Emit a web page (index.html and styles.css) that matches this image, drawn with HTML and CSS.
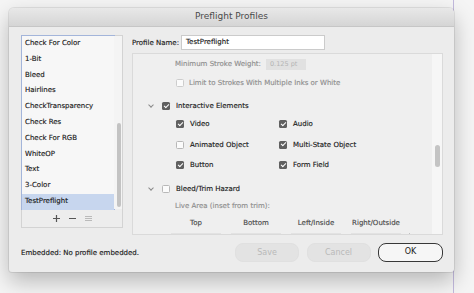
FILE: index.html
```html
<!DOCTYPE html>
<html lang="en">
<head>
  <meta charset="utf-8">
  <title>Preflight Profiles</title>
  <link rel="stylesheet" href="styles.css">
</head>
<body>
  <div class="window">
    <div class="titlebar">Preflight Profiles</div>
    <div class="content">
      <div class="main">
        <div class="profiles">
          <div class="listwrap">
            <ul class="rows">
              <li>Check For Color</li>
              <li>1-Bit</li>
              <li>Bleed</li>
              <li>Hairlines</li>
              <li>CheckTransparency</li>
              <li>Check Res</li>
              <li>Check For RGB</li>
              <li>WhiteOP</li>
              <li>Text</li>
              <li>3-Color</li>
              <li class="selected">TestPreflight</li>
            </ul>
            <div class="vscroll"><div class="thumb"></div></div>
          </div>
          <div class="listbar">
            <svg width="7" height="7" viewBox="0 0 7 7"><path d="M3.5 0v7M0 3.5h7" stroke="#555" stroke-width="1.2"/></svg>
            <svg width="7" height="7" viewBox="0 0 7 7"><path d="M0 3.5h7" stroke="#555" stroke-width="1.2"/></svg>
            <svg width="7" height="7" viewBox="0 0 7 7"><path d="M0 1.5h7M0 3.5h7M0 5.5h7" stroke="#b4b4b4" stroke-width="0.9"/></svg>
          </div>
        </div>

        <div class="editor">
          <div class="name-row">
            <span class="label">Profile Name:</span>
            <div class="field">TestPreflight</div>
          </div>
          <div class="panel">
            <div class="panel-body">
              <div class="prop-row stroke">
                <span class="dim">Minimum Stroke Weight:</span>
                <div class="field small">0.125 pt</div>
              </div>
              <div class="prop-row limit">
                <span class="cb off"></span>
                <span class="dim">Limit to Strokes With Multiple Inks or White</span>
              </div>
              <div class="prop-row section first">
                <span class="chevron"></span>
                <span class="cb on"></span>
                <span>Interactive Elements</span>
              </div>
              <div class="options">
                <div class="prop-row"><span class="cb on"></span><span>Video</span></div>
                <div class="prop-row"><span class="cb on"></span><span>Audio</span></div>
                <div class="prop-row"><span class="cb off"></span><span>Animated Object</span></div>
                <div class="prop-row"><span class="cb on"></span><span>Multi-State Object</span></div>
                <div class="prop-row"><span class="cb on"></span><span>Button</span></div>
                <div class="prop-row"><span class="cb on"></span><span>Form Field</span></div>
              </div>
              <div class="prop-row section">
                <span class="chevron"></span>
                <span class="cb off"></span>
                <span>Bleed/Trim Hazard</span>
              </div>
              <div class="prop-row live">
                <span class="dim">Live Area (inset from trim):</span>
              </div>
              <div class="insets">
                <span>Top</span>
                <span>Bottom</span>
                <span>Left/Inside</span>
                <span>Right/Outside</span>
              </div>
              <div class="inset-fields">
                <div></div><div></div><div></div><div></div>
                <span class="spin"></span>
              </div>
            </div>
            <div class="pscroll"><div class="thumb"></div></div>
          </div>
        </div>
      </div>

      <div class="footer">
        <div class="embedded">Embedded: No profile embedded.</div>
        <div class="buttons">
          <div class="btn disabled">Save</div>
          <div class="btn disabled">Cancel</div>
          <div class="btn default">OK</div>
        </div>
      </div>
    </div>
  </div>
</body>
</html>
```

FILE: styles.css
```css
html, body {
  margin: 0;
  height: 100%;
}

body {
  background:
    linear-gradient(to right, transparent 453px, #c2b9dd 453px, #c2b9dd 454px, transparent 454px),
    #f5f5f5;
  font-family: "DejaVu Sans", Verdana, sans-serif;
  font-size: 7px;
  color: #1a1a1a;
  overflow: hidden;
}

.window {
  margin: 8px 0 0 9px;
  width: 445px;
  height: 264px;
  background: #ececec;
  border-radius: 5px 5px 3px 3px;
  box-shadow: 0 0 0 1px rgba(0, 0, 0, 0.08), 0 9px 22px rgba(0, 0, 0, 0.26);
  overflow: hidden;
  -webkit-text-stroke: 0.15px currentColor;
}

.titlebar {
  box-sizing: border-box;
  height: 19px;
  line-height: 17px;
  text-align: center;
  font-size: 9px;
  color: #4a4a4a;
  background: linear-gradient(#e8e8e8, #d5d5d5);
  border-bottom: 1px solid #c6c6c6;
  -webkit-text-stroke: 0;
}

.content {
  padding: 8px 11px 0 12px;
}

.main {
  display: flex;
  gap: 9px;
}

/* profile list */

.profiles {
  box-sizing: border-box;
  width: 102px;
  height: 193px;
  border: 1px solid #d3d3d3;
  background: #ededed;
}

.listwrap {
  display: flex;
  height: 173px;
}

.rows {
  list-style: none;
  margin: 0;
  padding: 0;
  width: 92px;
  background: #f7f7f7;
  box-shadow: 0 0 0 1px #a3b5da;
}

.rows li {
  height: 15.8px;
  line-height: 15.8px;
  padding-left: 3px;
  white-space: nowrap;
}

.rows li.selected {
  background: #c7d6ee;
}

.vscroll {
  width: 8px;
  background: #f4f4f4;
}

.vscroll .thumb {
  margin: 87px 0 0 3px;
  width: 4px;
  height: 84px;
  border-radius: 2px;
  background: #c3c3c3;
}

.listbar {
  height: 18px;
  display: flex;
  align-items: center;
  justify-content: center;
  gap: 9px;
}

/* editor */

.editor {
  width: 311px;
  display: flex;
  flex-direction: column;
}

.name-row {
  display: flex;
  align-items: center;
  height: 15px;
}

.name-row .label {
  width: 49px;
}

.field {
  box-sizing: border-box;
  width: 144px;
  height: 15px;
  line-height: 13px;
  padding-left: 4px;
  background: #fff;
  border: 1px solid #cbcbcb;
}

.panel {
  box-sizing: border-box;
  margin-top: 3px;
  height: 182px;
  display: flex;
  border: 1px solid #dadada;
  background: #efefef;
}

.panel-body {
  flex: 1;
  overflow: hidden;
  padding-top: 4px;
}

.pscroll {
  width: 10px;
  background: #f6f6f6;
}

.pscroll .thumb {
  margin: 91px 0 0 3px;
  width: 5px;
  height: 22px;
  border-radius: 3px;
  background: #c4c4c4;
}

.prop-row {
  display: flex;
  align-items: center;
  height: 12px;
  white-space: nowrap;
}

.dim {
  color: #8e8e8e;
}

.stroke {
  padding-left: 42px;
  gap: 5px;
}

.field.small {
  width: 40px;
  height: 11px;
  line-height: 11px;
  border: none;
  background: #e1e1e1;
  color: #b4b4b4;
  font-size: 6.5px;
  -webkit-text-stroke: 0;
}

.limit {
  margin-top: 7px;
  padding-left: 43px;
  gap: 5px;
}

.section {
  margin-top: 12px;
  padding-left: 15px;
}

.section.first {
  margin-top: 11px;
}

.chevron {
  width: 3px;
  height: 3px;
  margin: -3px 9px 0 1px;
  border: solid #8a8a8a;
  border-width: 0 1px 1px 0;
  transform: rotate(45deg);
}

.section .cb {
  margin-right: 6px;
}

.cb {
  box-sizing: border-box;
  width: 8px;
  height: 8px;
  border-radius: 1.5px;
  flex: none;
}

.cb.off {
  background: #fbfbfb;
  border: 1px solid #b8b8b8;
}

.limit .cb.off {
  border-color: #cdcdcd;
}

.cb.on {
  background: #606060;
}

.cb.on::after {
  content: "";
  display: block;
  width: 2px;
  height: 4px;
  margin: 0.6px 0 0 2.8px;
  border: solid #fff;
  border-width: 0 1.2px 1.2px 0;
  transform: rotate(45deg);
}

.options {
  margin-top: 6px;
  padding-left: 43px;
  display: grid;
  grid-template-columns: 103px 1fr;
  row-gap: 8.5px;
}

.options .cb {
  margin-right: 6px;
}

.live {
  margin-top: 5px;
  padding-left: 42px;
}

.insets {
  margin-top: 5px;
  padding-left: 33px;
  display: grid;
  grid-template-columns: repeat(4, 60px);
  height: 12px;
  line-height: 12px;
  text-align: center;
  color: #4a4a4a;
}

.inset-fields {
  margin-top: 4px;
  padding-left: 38px;
  display: flex;
  gap: 10px;
  align-items: flex-start;
}

.inset-fields div {
  width: 50px;
  height: 12px;
  background: #f3f3f3;
  border-top: 1px solid #e2e2e2;
}

.inset-fields .spin {
  width: 2px;
  height: 2px;
  margin: 1px 0 0 -3px;
  border: solid #9a9a9a;
  border-width: 1px 0 0 1px;
  transform: rotate(45deg);
}

/* footer */

.footer {
  margin-top: 8px;
  height: 19px;
  display: flex;
  align-items: center;
  justify-content: space-between;
}

.buttons {
  display: flex;
  gap: 7.5px;
}

.btn {
  box-sizing: border-box;
  width: 64px;
  height: 19px;
  line-height: 17px;
  border-radius: 8px;
  text-align: center;
  font-size: 8px;
}

.btn.disabled {
  background: #e3e3e3;
  border: 1px solid #e0e0e0;
  color: #b9b9b9;
  -webkit-text-stroke: 0;
}

.btn.default {
  width: 65px;
  line-height: 16px;
  background: #f6f6f6;
  border: 1.5px solid #383838;
  color: #222;
  -webkit-text-stroke: 0;
}
```
